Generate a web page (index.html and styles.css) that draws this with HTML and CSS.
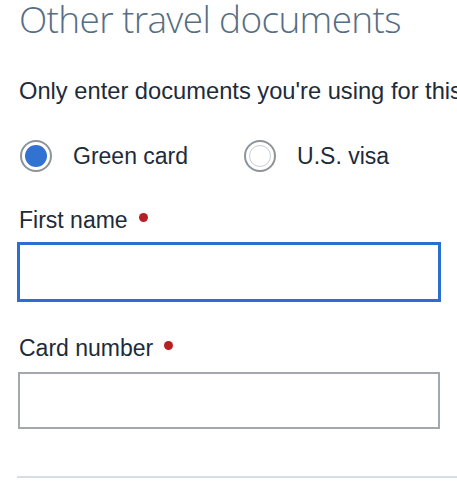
FILE: index.html
```html
<!DOCTYPE html>
<html lang="en">
<head>
<meta charset="utf-8">
<title>Other travel documents</title>
<link rel="stylesheet" href="styles.css">
</head>
<body>
<main class="section">
  <h1 class="section-title">Other travel documents</h1>
  <p class="section-intro">Only enter documents you're using for this trip.</p>
  <div class="radio-group" role="radiogroup">
    <label class="radio-option">
      <span class="radio-circle is-checked"><span class="radio-dot"></span></span>
      <span class="radio-text">Green card</span>
    </label>
    <label class="radio-option">
      <span class="radio-circle"><span class="radio-dot"></span></span>
      <span class="radio-text">U.S. visa</span>
    </label>
  </div>
  <div class="field field-first">
    <div class="field-label">First name<span class="required-dot"></span></div>
    <div class="field-input is-focused"></div>
  </div>
  <div class="field field-second">
    <div class="field-label">Card number<span class="required-dot"></span></div>
    <div class="field-input"></div>
  </div>
  <hr class="divider">
</main>
</body>
</html>
```
FILE: styles.css
```css
html, body {
  margin: 0;
  padding: 0;
  background: #ffffff;
  overflow: hidden;
}

.section {
  padding-left: 18px;
  font-family: "Liberation Sans", Arial, sans-serif;
  color: #1d2b3a;
  width: 600px;
}

.section-title {
  margin: 0;
  font-family: "Open Sans", sans-serif;
  font-weight: 300;
  font-size: 37px;
  letter-spacing: -0.65px;
  line-height: 38px;
  color: #566e83;
  padding-left: 1px;
}

.section-intro {
  margin: 40px 0 0 1px;
  font-size: 23.7px;
  line-height: 26px;
  white-space: nowrap;
}

.radio-group {
  margin-top: 36px;
  display: flex;
  align-items: center;
  gap: 56px;
  padding-left: 2px;
}

.radio-option {
  display: flex;
  align-items: center;
  gap: 21px;
  font-size: 23px;
  line-height: 26px;
}

.radio-circle {
  width: 32px;
  height: 32px;
  box-sizing: border-box;
  border: 2px solid #8d9499;
  border-radius: 50%;
  display: flex;
  align-items: center;
  justify-content: center;
}

.radio-dot {
  width: 22px;
  height: 22px;
  box-sizing: border-box;
  border-radius: 50%;
  border: 1.5px solid #c9d1d6;
}

.radio-circle.is-checked .radio-dot {
  border: none;
  background: #3273d2;
}

.field-first {
  margin-top: 35px;
}

.field-second {
  margin-top: 34px;
}

.field-label {
  font-size: 23px;
  line-height: 26px;
  padding-left: 1px;
}

.required-dot {
  display: inline-block;
  width: 9px;
  height: 9px;
  border-radius: 50%;
  background: #b81f22;
  margin-left: 11px;
  vertical-align: 6px;
}

.field-input {
  width: 422px;
  height: 57px;
  box-sizing: border-box;
  border: 2px solid #a2a8ac;
  background: #ffffff;
  margin-top: 11px;
}

.field-input.is-focused {
  height: 58px;
  margin-top: 10px;
  border-color: #2a6ed1;
  box-shadow: 0 0 0 1px #2a6ed1;
}

.divider {
  margin: 47px 0 0 -1px;
  border: none;
  height: 2px;
  background: #d6dde3;
  width: 460px;
}
```
